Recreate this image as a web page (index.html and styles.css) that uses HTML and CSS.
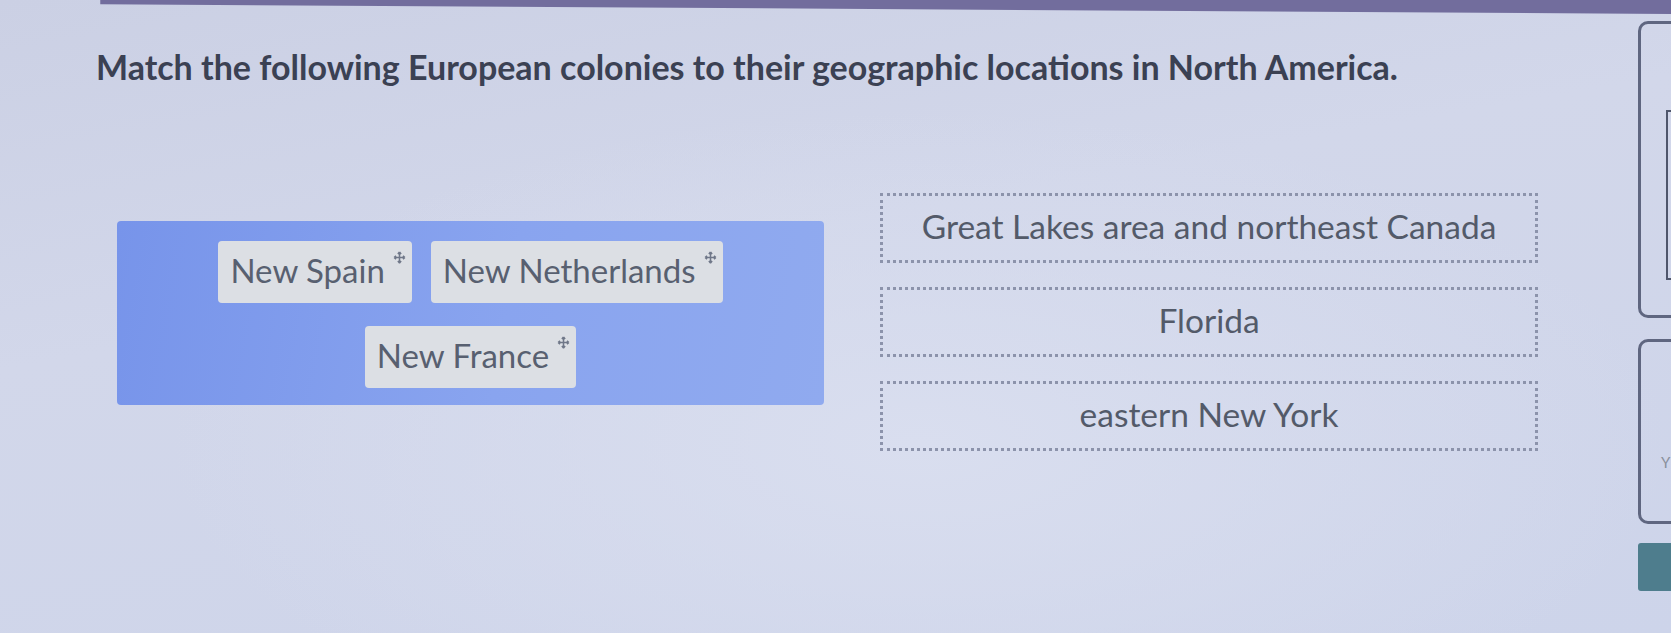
FILE: index.html
```html
<!DOCTYPE html>
<html lang="en">
<head>
    <meta charset="UTF-8">
    <meta name="viewport" content="width=device-width, initial-scale=1.0">
    <title>Matching Question</title>
    <link rel="stylesheet" href="styles.css">
</head>
<body>
    <div class="topbar"></div>

    <div class="page">
        <main class="question">
            <h1 class="prompt">Match the following European colonies to their geographic locations in North America.</h1>

            <div class="match">
                <!-- Draggable answer bank -->
                <div class="bank">
                    <div class="chip">New Spain<svg class="grip" viewBox="0 0 12 12"><path d="M6 1v10M1 6h10M6 1L4.5 2.8M6 1l1.5 1.8M6 11l-1.5-1.8M6 11l1.5-1.8M1 6l1.8-1.5M1 6l1.8 1.5M11 6l-1.8-1.5M11 6l-1.8 1.5"/></svg></div>
                    <div class="chip">New Netherlands<svg class="grip" viewBox="0 0 12 12"><path d="M6 1v10M1 6h10M6 1L4.5 2.8M6 1l1.5 1.8M6 11l-1.5-1.8M6 11l1.5-1.8M1 6l1.8-1.5M1 6l1.8 1.5M11 6l-1.8-1.5M11 6l-1.8 1.5"/></svg></div>
                    <div class="chip">New France<svg class="grip" viewBox="0 0 12 12"><path d="M6 1v10M1 6h10M6 1L4.5 2.8M6 1l1.5 1.8M6 11l-1.5-1.8M6 11l1.5-1.8M1 6l1.8-1.5M1 6l1.8 1.5M11 6l-1.8-1.5M11 6l-1.8 1.5"/></svg></div>
                </div>

                <!-- Drop targets -->
                <div class="targets">
                    <div class="slot">Great Lakes area and northeast Canada</div>
                    <div class="slot">Florida</div>
                    <div class="slot">eastern New York</div>
                </div>
            </div>
        </main>

        <aside class="side">
            <div class="side-card">
                <div class="side-inner"></div>
            </div>
            <div class="side-card side-card--short">
                <span class="side-label">Y</span>
            </div>
            <div class="side-btn"></div>
        </aside>
    </div>
</body>
</html>
```

FILE: styles.css
```css
* {
    box-sizing: border-box;
    margin: 0;
    padding: 0;
}

body {
    width: 1671px;
    height: 633px;
    overflow: hidden;
    font-family: 'Lato', 'Open Sans', sans-serif;
    color: #4b5161;
    background:
        radial-gradient(ellipse 60% 70% at 55% 70%, #d9deef 0%, rgba(217, 222, 239, 0) 75%),
        linear-gradient(170deg, #cbd0e4 0%, #d2d7ea 40%, #cdd4ea 100%);
}

.topbar {
    height: 14px;
    background: #726d9d;
    clip-path: polygon(6% 0, 100% 0, 100% 100%, 6% 30%);
}

.page {
    display: flex;
}

.question {
    width: 1638px;
    padding-left: 96px;
}

.prompt {
    margin-top: 32px;
    font-size: 34px;
    font-weight: 700;
    line-height: 42px;
    color: #3b4153;
}

.match {
    display: flex;
    align-items: flex-start;
    margin-top: 105px;
}

.bank {
    width: 707px;
    margin-left: 21px;
    margin-top: 28px;
    padding: 20px 20px 17px;
    display: flex;
    flex-wrap: wrap;
    justify-content: center;
    gap: 23px 19px;
    border-radius: 4px;
    background: linear-gradient(100deg, #7794ea 0%, #89a4ef 55%, #90aaef 100%);
}

.chip {
    display: flex;
    align-items: center;
    height: 62px;
    padding: 0 6px 4px 12px;
    border-radius: 4px;
    background: #dcdfe4;
    font-size: 33px;
    color: #586070;
}

.grip {
    width: 13px;
    height: 13px;
    margin-left: 8px;
    align-self: flex-start;
    margin-top: 10px;
    fill: none;
    stroke: #6f7788;
    stroke-width: 1.4;
}

.targets {
    width: 658px;
    margin-left: 56px;
    display: flex;
    flex-direction: column;
    gap: 24px;
}

.slot {
    height: 70px;
    display: flex;
    align-items: center;
    justify-content: center;
    padding-bottom: 4px;
    border: 3px dotted #8c93ab;
    font-size: 33.5px;
    color: #535a69;
}

.side {
    width: 33px;
    overflow: hidden;
    padding-top: 7px;
    display: flex;
    flex-direction: column;
    gap: 21px;
}

.side-card {
    width: 60px;
    height: 297px;
    flex-shrink: 0;
    border: 3px solid #5f6680;
    border-radius: 10px;
    padding: 86px 0 0 25px;
}

.side-card--short {
    height: 185px;
    padding: 110px 0 0 20px;
}

.side-inner {
    width: 30px;
    height: 170px;
    border: 2px solid #4f566c;
}

.side-label {
    font-size: 15px;
    color: #8a909c;
}

.side-btn {
    width: 60px;
    height: 48px;
    flex-shrink: 0;
    margin-top: -2px;
    border-radius: 3px;
    background: #4e7d8d;
}
```
